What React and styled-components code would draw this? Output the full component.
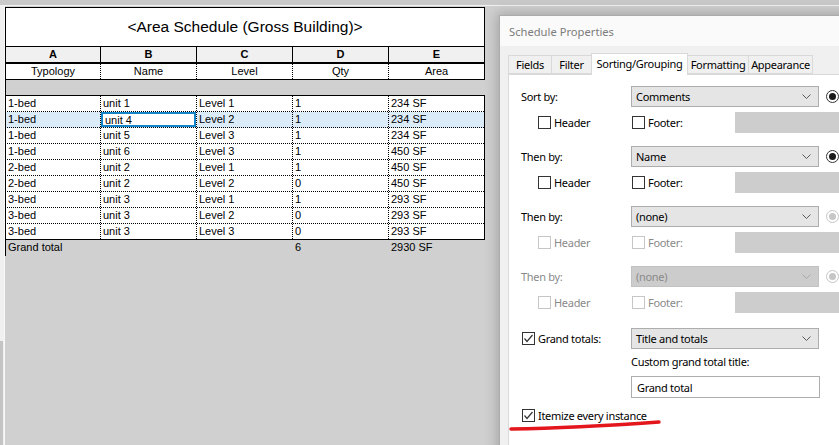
import React from 'react';
import styled, { createGlobalStyle, css } from 'styled-components';

const GlobalStyle = createGlobalStyle`
  html, body { margin: 0; padding: 0; }
  body { width: 839px; height: 445px; overflow: hidden; background: #d0d0d0; }
`;

const Screen = styled.div`
  position: relative;
  width: 839px;
  height: 445px;
  overflow: hidden;
  background: #d0d0d0;
  display: flex;
  flex-direction: column;
  font-family: "Liberation Sans", Arial, sans-serif;
`;

const Toolbar = styled.div`
  flex: none;
  height: 5px;
  background: #c9c9c9;
  border-bottom: 1px solid #f2f2f2;
`;

const Workspace = styled.div`
  flex: 1;
  min-height: 0;
  display: flex;
`;

const SideRail = styled.div`
  flex: none;
  width: 5px;
  box-sizing: border-box;
  background: #f0f0f0;
  border-right: 1px solid #f8f8f8;
  display: flex;
  flex-direction: column;
`;

const RailThumb = styled.div`
  margin-top: auto;
  width: 3px;
  height: 104px;
  background: #c4c4c4;
`;

const ScheduleView = styled.div`
  width: 480px;
  padding-top: 1px;
  display: flex;
  flex-direction: column;
  color: #000;
`;

const TitleBox = styled.div`
  height: 40px;
  box-sizing: border-box;
  border: 1px solid #000;
  background: #fff;
  display: flex;
  align-items: center;
  justify-content: center;
  font-size: 15.5px;
`;

const GridRow = styled.div`
  display: grid;
  grid-template-columns: 95px 96px 96px 96px 96px;
  box-sizing: border-box;
  border-left: 1px solid #000;
  height: ${p => p.$h}px;
  background: ${p => p.$bg || 'transparent'};
  border-bottom: ${p => p.$bottom || 'none'};
`;

const Cell = styled.div`
  box-sizing: border-box;
  border-right: ${p => p.$line || 'none'};
  padding: 0 2px;
  font-size: 11px;
  line-height: 15px;
  white-space: nowrap;
  overflow: hidden;
  text-align: ${p => (p.$center ? 'center' : 'left')};
  font-weight: ${p => (p.$bold ? 'bold' : 'normal')};
  ${p =>
    p.$selected &&
    css`
      background: #fff;
      box-shadow: inset 0 0 0 2px #1384c8;
      padding: 1px 4px 0;
    `}
`;

const DataBlock = styled.div`
  border-top: 1px solid #000;
  border-right: 1px solid #000;
  width: 480px;
  box-sizing: border-box;
  & > div:last-child {
    border-bottom: 1px solid #000;
  }
`;

const Dialog = styled.div`
  position: absolute;
  left: 499px;
  top: 15px;
  width: 380px;
  height: 460px;
  box-sizing: border-box;
  border: 1px solid #ababab;
  background: #f0f0f0;
  box-shadow: 0 0 12px 2px rgba(0, 0, 0, 0.22);
  display: flex;
  flex-direction: column;
  font-family: "Noto Sans", "Segoe UI", sans-serif;
  font-size: 11px;
  letter-spacing: -0.3px;
  color: #000;
`;

const DialogTitle = styled.div`
  flex: none;
  height: 30px;
  padding-left: 9px;
  display: flex;
  align-items: center;
  background: #fafafa;
  color: #7c7c7c;
  font-size: 11.2px;
  letter-spacing: 0;
`;

const DialogBody = styled.div`
  flex: 1;
  display: flex;
  flex-direction: column;
  padding: 7px 0 0 8px;
`;

const TabStrip = styled.div`
  display: flex;
  align-items: flex-end;
  height: 21px;
  position: relative;
  z-index: 1;
`;

const Tab = styled.div`
  box-sizing: border-box;
  width: ${p => p.$w}px;
  height: ${p => (p.$active ? 22 : 19)}px;
  margin-bottom: ${p => (p.$active ? -1 : 0)}px;
  margin-right: -1px;
  border: 1px solid #d9d9d9;
  border-bottom: ${p => (p.$active ? 'none' : '1px solid #d9d9d9')};
  background: ${p => (p.$active ? '#fff' : '#f0f0f0')};
  display: flex;
  align-items: center;
  justify-content: center;
  padding-bottom: ${p => (p.$active ? 3 : 0)}px;
`;

const TabPage = styled.div`
  flex: 1;
  background: #fff;
  border: 1px solid #d9d9d9;
  padding: 11px 0 0 12px;
  display: flex;
  flex-direction: column;
`;

const SortGroup = styled.div`
  display: flex;
  flex-direction: column;
  gap: 5px;
  margin-bottom: 13px;
`;

const FieldRow = styled.div`
  display: flex;
  align-items: center;
  height: 21px;
`;

const FieldLabel = styled.div`
  width: 110px;
  flex: none;
  color: ${p => (p.$disabled ? '#8a8a8a' : '#000')};
`;

const Select = styled.div`
  box-sizing: border-box;
  width: 188px;
  height: 21px;
  flex: none;
  padding: 0 0 0 4px;
  display: flex;
  align-items: center;
  justify-content: space-between;
  background: ${p => (p.$disabled ? '#cccccc' : '#e5e5e5')};
  border: 1px solid ${p => (p.$disabled ? '#c2c2c2' : '#adadad')};
  color: ${p => (p.$disabled ? '#8a8a8a' : '#000')};
  svg {
    margin-right: 7px;
  }
`;

const Radio = styled.div`
  box-sizing: border-box;
  width: 13px;
  height: 13px;
  margin-left: 7px;
  border-radius: 50%;
  border: 1px solid ${p => (p.$disabled ? '#c6c6c6' : '#333')};
  display: flex;
  align-items: center;
  justify-content: center;
  &::after {
    content: '';
    width: 7px;
    height: 7px;
    border-radius: 50%;
    background: ${p => (p.$disabled ? '#c6c6c6' : '#1a1a1a')};
  }
`;

const OptionRow = styled.div`
  display: flex;
  align-items: center;
  height: 21px;
  padding-left: 17px;
`;

const CheckItem = styled.label`
  display: flex;
  align-items: center;
  gap: 3px;
  flex: none;
  width: ${p => (p.$w ? `${p.$w}px` : 'auto')};
  color: ${p => (p.$disabled ? '#8a8a8a' : '#000')};
`;

const Box = styled.span`
  box-sizing: border-box;
  width: 13px;
  height: 13px;
  flex: none;
  background: #fff;
  border: 1px solid ${p => (p.$disabled ? '#c6c6c6' : '#333')};
  display: flex;
  align-items: center;
  justify-content: center;
`;

const GrayField = styled.div`
  flex: 1;
  height: 21px;
  background: #cdcdcd;
`;

const TotalsBlock = styled.div`
  display: flex;
  flex-direction: column;
  margin-top: 2px;
`;

const TotalsLabel = styled.div`
  width: 110px;
  flex: none;
  padding-left: 1px;
  box-sizing: border-box;
`;

const SubBlock = styled.div`
  margin-left: 110px;
  display: flex;
  flex-direction: column;
`;

const Caption = styled.div`
  margin-top: 6px;
  line-height: 14px;
`;

const TextBox = styled.div`
  box-sizing: border-box;
  margin-top: 7px;
  width: 189px;
  height: 22px;
  border: 1px solid #adadad;
  background: #fff;
  padding-left: 5px;
  display: flex;
  align-items: center;
`;

const ItemizeRow = styled.div`
  display: flex;
  align-items: center;
  height: 21px;
  margin-top: 7px;
  padding-left: 1px;
`;

const Annotation = styled.svg`
  position: absolute;
  left: 0;
  top: 0;
  pointer-events: none;
`;

const Chevron = ({ disabled }) => (
  <svg width="9" height="5" viewBox="0 0 9 5">
    <polyline points="0.5,0.5 4.5,4.5 8.5,0.5" fill="none" stroke={disabled ? '#a9a9a9' : '#5a5a5a'} strokeWidth="1" />
  </svg>
);

const Checkbox = ({ checked, disabled, label, w }) => (
  <CheckItem $w={w} $disabled={disabled}>
    <Box $disabled={disabled}>
      {checked && (
        <svg width="11" height="11" viewBox="0 0 11 11">
          <polyline points="1.5,5.5 4,8.5 9.5,2" fill="none" stroke="#333" strokeWidth="1.2" />
        </svg>
      )}
    </Box>
    {label}
  </CheckItem>
);

const letters = ['A', 'B', 'C', 'D', 'E'];
const headers = ['Typology', 'Name', 'Level', 'Qty', 'Area'];
const rows = [
  ['1-bed', 'unit 1', 'Level 1', '1', '234 SF'],
  ['1-bed', 'unit 4', 'Level 2', '1', '234 SF'],
  ['1-bed', 'unit 5', 'Level 3', '1', '234 SF'],
  ['1-bed', 'unit 6', 'Level 3', '1', '450 SF'],
  ['2-bed', 'unit 2', 'Level 1', '1', '450 SF'],
  ['2-bed', 'unit 2', 'Level 2', '0', '450 SF'],
  ['3-bed', 'unit 3', 'Level 1', '1', '293 SF'],
  ['3-bed', 'unit 3', 'Level 2', '0', '293 SF'],
  ['3-bed', 'unit 3', 'Level 3', '0', '293 SF'],
];
const totals = ['Grand total', '', '', '6', '2930 SF'];

const tabs = [
  { name: 'Fields', w: 44 },
  { name: 'Filter', w: 41 },
  { name: 'Sorting/Grouping', w: 97, active: true },
  { name: 'Formatting', w: 62 },
  { name: 'Appearance', w: 65 },
];

const sortGroups = [
  { label: 'Sort by:', value: 'Comments', level: 2 },
  { label: 'Then by:', value: 'Name', level: 2 },
  { label: 'Then by:', value: '(none)', level: 1 },
  { label: 'Then by:', value: '(none)', level: 0 },
];

const SOLID = '1px solid #000';
const DOTTED = '1px dotted #000';

export default function App() {
  return (
    <>
      <GlobalStyle />
      <Screen>
        <Toolbar />
        <Workspace>
          <SideRail>
            <RailThumb />
          </SideRail>
          <ScheduleView>
            <TitleBox>&lt;Area Schedule (Gross Building)&gt;</TitleBox>
            <GridRow $h={17} $bg="#f0f0f0" $bottom="2px solid #000">
              {letters.map(l => (
                <Cell key={l} $line={SOLID} $center $bold>
                  {l}
                </Cell>
              ))}
            </GridRow>
            <GridRow $h={16} $bg="#fff" $bottom={SOLID}>
              {headers.map((h, i) => (
                <Cell key={h} $line={i === 4 ? SOLID : DOTTED} $center>
                  {h}
                </Cell>
              ))}
            </GridRow>
            <GridRow $h={15} />
            <DataBlock>
              {rows.map((r, ri) => (
                <GridRow key={ri} $h={16} $bg={ri === 1 ? '#dbebf8' : '#fff'} $bottom={DOTTED}>
                  {r.map((v, ci) => (
                    <Cell key={ci} $line={ci === 4 ? 'none' : DOTTED} $selected={ri === 1 && ci === 1}>
                      {v}
                    </Cell>
                  ))}
                </GridRow>
              ))}
            </DataBlock>
            <GridRow $h={16}>
              {totals.map((v, i) => (
                <Cell key={i}>{v}</Cell>
              ))}
            </GridRow>
          </ScheduleView>
        </Workspace>

        <Dialog>
          <DialogTitle>Schedule Properties</DialogTitle>
          <DialogBody>
            <TabStrip>
              {tabs.map(t => (
                <Tab key={t.name} $w={t.w} $active={t.active}>
                  {t.name}
                </Tab>
              ))}
            </TabStrip>
            <TabPage>
              {sortGroups.map((g, i) => (
                <SortGroup key={i}>
                  <FieldRow>
                    <FieldLabel $disabled={g.level === 0}>{g.label}</FieldLabel>
                    <Select $disabled={g.level === 0}>
                      {g.value}
                      <Chevron disabled={g.level === 0} />
                    </Select>
                    <Radio $disabled={g.level < 2} />
                  </FieldRow>
                  <OptionRow>
                    <Checkbox label="Header" w={94} disabled={g.level < 2} />
                    <Checkbox label="Footer:" w={103} disabled={g.level < 2} />
                    <GrayField />
                  </OptionRow>
                </SortGroup>
              ))}
              <TotalsBlock>
                <FieldRow>
                  <TotalsLabel>
                    <Checkbox checked label="Grand totals:" />
                  </TotalsLabel>
                  <Select>
                    Title and totals
                    <Chevron />
                  </Select>
                </FieldRow>
                <SubBlock>
                  <Caption>Custom grand total title:</Caption>
                  <TextBox>Grand total</TextBox>
                </SubBlock>
                <ItemizeRow>
                  <Checkbox checked label="Itemize every instance" />
                </ItemizeRow>
              </TotalsBlock>
            </TabPage>
          </DialogBody>
          <Annotation width="200" height="430">
            <path
              d="M11 413 Q 75 412 159 406"
              fill="none"
              stroke="#e3161c"
              strokeWidth="3.4"
              strokeLinecap="round"
            />
          </Annotation>
        </Dialog>
      </Screen>
    </>
  );
}
